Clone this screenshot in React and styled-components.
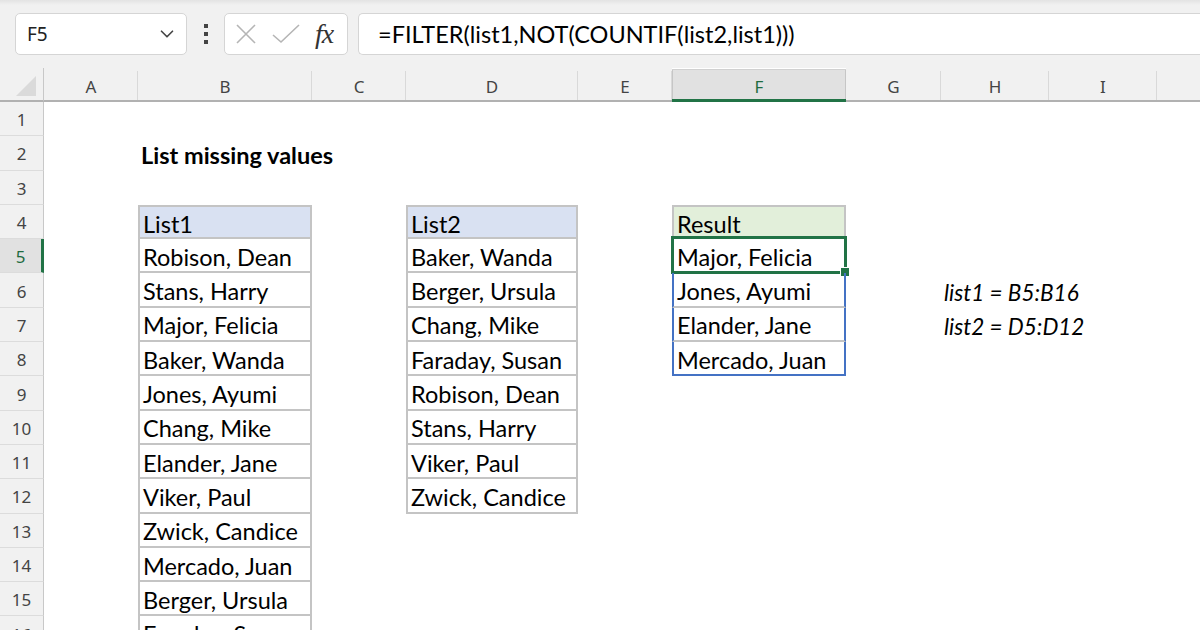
import React from 'react';
import styled, { createGlobalStyle, css } from 'styled-components';
import { ChevronDown } from 'lucide-react';

const GRAY = '#c4c4c4';
const BLUE = '#4472c4';
const GREEN = '#217346';

const fills = {
  blue: '#d9e1f2',
  green: '#e2efda',
};

const columns = [
  { id: 'A', w: 94 },
  { id: 'B', w: 174 },
  { id: 'C', w: 94 },
  { id: 'D', w: 172 },
  { id: 'E', w: 94 },
  { id: 'F', w: 174 },
  { id: 'G', w: 95 },
  { id: 'H', w: 108 },
  { id: 'I', w: 108 },
  { id: '', w: 108 },
];

const ROWS = 16;

const list1 = [
  'Robison, Dean', 'Stans, Harry', 'Major, Felicia', 'Baker, Wanda',
  'Jones, Ayumi', 'Chang, Mike', 'Elander, Jane', 'Viker, Paul',
  'Zwick, Candice', 'Mercado, Juan', 'Berger, Ursula', 'Faraday, Susan',
];
const list2 = [
  'Baker, Wanda', 'Berger, Ursula', 'Chang, Mike', 'Faraday, Susan',
  'Robison, Dean', 'Stans, Harry', 'Viker, Paul', 'Zwick, Candice',
];
const result = ['Major, Felicia', 'Jones, Ayumi', 'Elander, Jane', 'Mercado, Juan'];

const cells = {};
const table = (col, row, title, items, fill, edge = GRAY) => {
  cells[col + row] = { text: title, fill, t: GRAY, r: GRAY, b: GRAY, l: GRAY };
  items.forEach((text, i) => {
    cells[col + (row + 1 + i)] = {
      text,
      l: edge,
      r: edge,
      b: i === items.length - 1 ? edge : GRAY,
    };
  });
};

cells.B2 = { text: 'List missing values', bold: true };
table('B', 4, 'List1', list1, 'blue');
table('D', 4, 'List2', list2, 'blue');
table('F', 4, 'Result', result, 'green', BLUE);
cells.F5.selected = true;
cells.H6 = { text: 'list1 = B5:B16', italic: true };
cells.H7 = { text: 'list2 = D5:D12', italic: true };

const GlobalStyle = createGlobalStyle`
  html, body {
    margin: 0;
    padding: 0;
    background: #fff;
    overflow: hidden;
  }
  body {
    width: 1200px;
    height: 630px;
  }
`;

const Window = styled.div`
  width: 1200px;
  height: 630px;
  overflow: hidden;
  background: #fff;
`;

const Toolbar = styled.div`
  height: 68px;
  box-sizing: border-box;
  display: flex;
  align-items: flex-start;
  padding: 13px 0 0 15px;
  background: linear-gradient(#e3e3e3 0, #f1f1f1 5px, #f1f1f1 100%);
`;

const Field = styled.div`
  height: 42px;
  box-sizing: border-box;
  background: #fff;
  border: 1px solid #d5d5d5;
  border-radius: 5px;
  display: flex;
  align-items: center;
`;

const NameBox = styled(Field)`
  width: 172px;
  justify-content: space-between;
  padding: 0 8px 0 11px;
  font-family: "Noto Sans", "Open Sans", sans-serif;
  font-size: 19px;
  color: #222;
  svg {
    color: #444;
  }
`;

const Dots = styled.div`
  width: 37px;
  height: 42px;
  display: flex;
  align-items: center;
  justify-content: center;
`;

const FxBox = styled(Field)`
  width: 124px;
  margin-right: 10px;
  padding: 0 0 0 9px;
  gap: 14px;
`;

const Fx = styled.span`
  font-family: "Liberation Serif", "DejaVu Serif", serif;
  font-style: italic;
  font-size: 28px;
  color: #333;
  margin-left: 1px;
  letter-spacing: -1px;
`;

const FormulaBox = styled(Field)`
  flex: 1;
  border-right: none;
  border-radius: 5px 0 0 5px;
  padding-left: 19px;
  font-family: Lato, "Liberation Sans", sans-serif;
  font-size: 23.5px;
  color: #000;
  white-space: nowrap;
`;

const Sheet = styled.div`
  display: grid;
  grid-template-columns: 44px ${columns.map((c) => `${c.w}px`).join(' ')};
  grid-template-rows: 34px repeat(${ROWS}, 34.3px);
`;

const headText = css`
  font-family: "Noto Sans", "Open Sans", sans-serif;
  font-size: 17px;
  color: #444;
`;

const Corner = styled.div`
  background: #f1f1f1;
  border-right: 1px solid #c8c8c8;
  border-bottom: 2px solid #b1b1b1;
  box-sizing: border-box;
  display: flex;
  align-items: flex-end;
  justify-content: flex-end;
  padding: 0 7px 4px 0;
`;

const ColHead = styled.div`
  ${headText};
  position: relative;
  box-sizing: border-box;
  display: flex;
  align-items: center;
  justify-content: center;
  padding-top: 4px;
  overflow: hidden;
  background: ${(p) => (p.$active ? '#e1e1e1' : '#f1f1f1')};
  border-bottom: ${(p) => (p.$active ? `3px solid ${GREEN}` : '2px solid #b1b1b1')};
  color: ${(p) => (p.$active ? '#1e6b3f' : '#444')};

  ${(p) =>
    p.$active
      ? css`
          border-top: 1px solid #d0d0d0;
          margin-top: 1px;
          box-shadow: inset 1px 0 #c6c6c6, inset -1px 0 #c6c6c6;
        `
      : css`
          &::after {
            content: '';
            position: absolute;
            right: 0;
            top: 3px;
            bottom: 0;
            width: 1px;
            background: #d9d9d9;
          }
        `}
`;

const RowHead = styled.div`
  ${headText};
  box-sizing: border-box;
  display: flex;
  align-items: center;
  justify-content: center;
  padding-top: 2px;
  background: ${(p) => (p.$active ? '#e1e1e1' : '#f1f1f1')};
  color: ${(p) => (p.$active ? '#1e6b3f' : '#444')};
  border-bottom: 1px solid #dcdcdc;
  border-right: ${(p) => (p.$active ? `3px solid ${GREEN}` : '1px solid #c8c8c8')};
`;

const edge = (side, color) => (color ? `border-${side}: 2px solid ${color};` : '');

const Cell = styled.div`
  position: relative;
  box-sizing: border-box;
  display: flex;
  align-items: center;
  padding: 3px 0 0 3px;
  white-space: nowrap;
  font-family: Lato, "Liberation Sans", sans-serif;
  font-size: ${(p) => (p.$italic ? '22.5px' : '23.5px')};
  color: #000;
  background: ${(p) => fills[p.$fill] || 'transparent'};
  font-weight: ${(p) => (p.$bold ? 700 : 400)};
  font-style: ${(p) => (p.$italic ? 'italic' : 'normal')};
  ${(p) => edge('top', p.$t)}
  ${(p) => edge('right', p.$r)}
  ${(p) => edge('bottom', p.$b)}
  ${(p) => edge('left', p.$l)}

  ${(p) =>
    p.$selected &&
    css`
      &::before {
        content: '';
        position: absolute;
        top: -3px;
        left: -3px;
        right: -3px;
        bottom: -3px;
        border: 3px solid ${GREEN};
        pointer-events: none;
      }
      &::after {
        content: '';
        position: absolute;
        right: -6px;
        bottom: -6px;
        width: 8px;
        height: 8px;
        background: ${GREEN};
        border: 1px solid #fff;
      }
    `}
`;

const XIcon = () => (
  <svg width="24" height="24" viewBox="0 0 24 24" fill="none" stroke="#b5b5b5" strokeWidth="1.6">
    <path d="M3 3 L21 21 M21 3 L3 21" />
  </svg>
);

const CheckIcon = () => (
  <svg width="28" height="24" viewBox="0 0 28 24" fill="none" stroke="#b5b5b5" strokeWidth="1.6">
    <path d="M1 13 L9 20 L27 3" />
  </svg>
);

const DotsIcon = () => (
  <svg width="6" height="22" viewBox="0 0 6 22" fill="#444">
    <rect x="1" y="1" width="4" height="4" />
    <rect x="1" y="9" width="4" height="4" />
    <rect x="1" y="17" width="4" height="4" />
  </svg>
);

const CornerTriangle = () => (
  <svg width="20" height="20" viewBox="0 0 20 20">
    <polygon points="20,0 20,20 0,20" fill="#dadada" />
  </svg>
);

const App = () => (
  <Window>
    <GlobalStyle />
    <Toolbar>
      <NameBox>
        F5
        <ChevronDown size={22} strokeWidth={1.8} />
      </NameBox>
      <Dots>
        <DotsIcon />
      </Dots>
      <FxBox>
        <XIcon />
        <CheckIcon />
        <Fx>fx</Fx>
      </FxBox>
      <FormulaBox>=FILTER(list1,NOT(COUNTIF(list2,list1)))</FormulaBox>
    </Toolbar>
    <Sheet>
      <Corner>
        <CornerTriangle />
      </Corner>
      {columns.map((c, i) => (
        <ColHead key={`h${i}`} $active={c.id === 'F'}>
          {c.id}
        </ColHead>
      ))}
      {Array.from({ length: ROWS }, (_, r) => {
        const row = r + 1;
        return (
          <React.Fragment key={row}>
            <RowHead $active={row === 5}>{row}</RowHead>
            {columns.map((c, i) => {
              const d = cells[c.id + row] || {};
              return (
                <Cell
                  key={`${row}-${i}`}
                  $fill={d.fill}
                  $bold={d.bold}
                  $italic={d.italic}
                  $t={d.t}
                  $r={d.r}
                  $b={d.b}
                  $l={d.l}
                  $selected={d.selected}
                >
                  {d.text}
                </Cell>
              );
            })}
          </React.Fragment>
        );
      })}
    </Sheet>
  </Window>
);

export default App;
